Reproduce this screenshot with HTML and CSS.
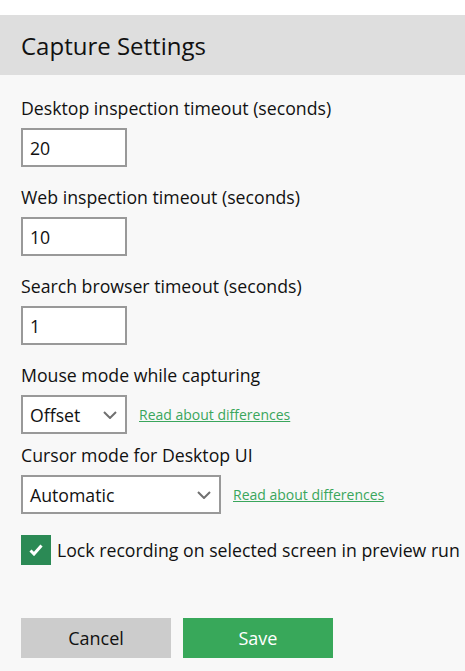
FILE: index.html
```html
<!DOCTYPE html>
<html lang="en">
<head>
<meta charset="utf-8">
<title>Capture Settings</title>
<link rel="stylesheet" href="styles.css">
</head>
<body>
<div class="strip"></div>
<div class="panel">
  <header class="header"><h1 class="title">Capture Settings</h1></header>
  <main class="content">
    <div class="field">
      <label class="label">Desktop inspection timeout (seconds)</label>
      <input class="num" type="text" value="20">
    </div>
    <div class="field">
      <label class="label">Web inspection timeout (seconds)</label>
      <input class="num" type="text" value="10">
    </div>
    <div class="field">
      <label class="label">Search browser timeout (seconds)</label>
      <input class="num" type="text" value="1">
    </div>
    <div class="field tight">
      <label class="label">Mouse mode while capturing</label>
      <div class="row">
        <div class="select small"><span>Offset</span>
          <svg class="chev" width="14" height="8" viewBox="0 0 14 8"><path d="M1 1 L7 7 L13 1" fill="none" stroke="#707070" stroke-width="2"/></svg>
        </div>
        <a class="link" href="#">Read about differences</a>
      </div>
    </div>
    <div class="field last">
      <label class="label">Cursor mode for Desktop UI</label>
      <div class="row">
        <div class="select wide"><span>Automatic</span>
          <svg class="chev" width="14" height="8" viewBox="0 0 14 8"><path d="M1 1 L7 7 L13 1" fill="none" stroke="#707070" stroke-width="2"/></svg>
        </div>
        <a class="link" href="#">Read about differences</a>
      </div>
    </div>
    <div class="check-row">
      <span class="checkbox">
        <svg width="14" height="12" viewBox="0 0 14 12"><path d="M1.5 6.5 L5 10 L12.5 1.5" fill="none" stroke="#ffffff" stroke-width="3"/></svg>
      </span>
      <span class="check-label">Lock recording on selected screen in preview run</span>
    </div>
    <div class="buttons">
      <button class="btn cancel" type="button">Cancel</button>
      <button class="btn save" type="button">Save</button>
    </div>
  </main>
</div>
</body>
</html>
```

FILE: styles.css
```css
html, body {
  margin: 0;
  padding: 0;
  background: #f8f8f8;
}
body {
  font-family: "Open Sans", "Noto Sans", "Liberation Sans", sans-serif;
  color: #111;
  overflow: hidden;
}
.strip {
  height: 15px;
  background: #ffffff;
}
.panel {
  background: #f8f8f8;
  min-height: 656px;
}
.header {
  height: 60px;
  background: #dedede;
  display: flex;
  align-items: center;
  padding-left: 21px;
}
.title {
  margin: 0;
  padding-top: 2px;
  font-size: 24px;
  font-weight: 400;
  color: #111;
  line-height: 1;
}
.content {
  padding: 21px 21px 0 21px;
}
.field {
  display: flex;
  flex-direction: column;
  align-items: flex-start;
  margin-bottom: 18px;
}
.field.tight {
  margin-bottom: 9px;
}
.field.last {
  margin-bottom: 21px;
}
.label {
  font-size: 17.7px;
  line-height: 24px;
  margin-bottom: 8px;
  white-space: nowrap;
}
.num {
  box-sizing: border-box;
  width: 106px;
  height: 39px;
  border: 2px solid #999999;
  background: #ffffff;
  padding: 0 7px;
  margin: 0;
  font-family: inherit;
  font-size: 17.7px;
  color: #111;
  outline: none;
}
.row {
  display: flex;
  align-items: center;
  gap: 12px;
}
.select {
  box-sizing: border-box;
  height: 39px;
  border: 2px solid #999999;
  background: #ffffff;
  display: flex;
  align-items: center;
  justify-content: space-between;
  padding: 0 8px 0 7px;
  font-size: 17.7px;
  color: #111;
}
.select.small { width: 106px; }
.select.wide { width: 200px; }
.chev { display: block; }
.link {
  font-size: 14px;
  color: #3aa65c;
  text-decoration: underline;
  white-space: nowrap;
}
.check-row {
  display: flex;
  align-items: center;
  gap: 6px;
  white-space: nowrap;
}
.checkbox {
  width: 30px;
  height: 30px;
  background: #2b8a55;
  display: flex;
  align-items: center;
  justify-content: center;
  flex: none;
}
.check-label {
  font-size: 17.7px;
  line-height: 24px;
}
.buttons {
  display: flex;
  gap: 12px;
  margin-top: 53px;
}
.btn {
  width: 150px;
  height: 40px;
  border: none;
  margin: 0;
  padding: 0;
  font-family: inherit;
  font-size: 18px;
}
.cancel {
  background: #cccccc;
  color: #111;
}
.save {
  background: #38a85a;
  color: #ffffff;
}
```
